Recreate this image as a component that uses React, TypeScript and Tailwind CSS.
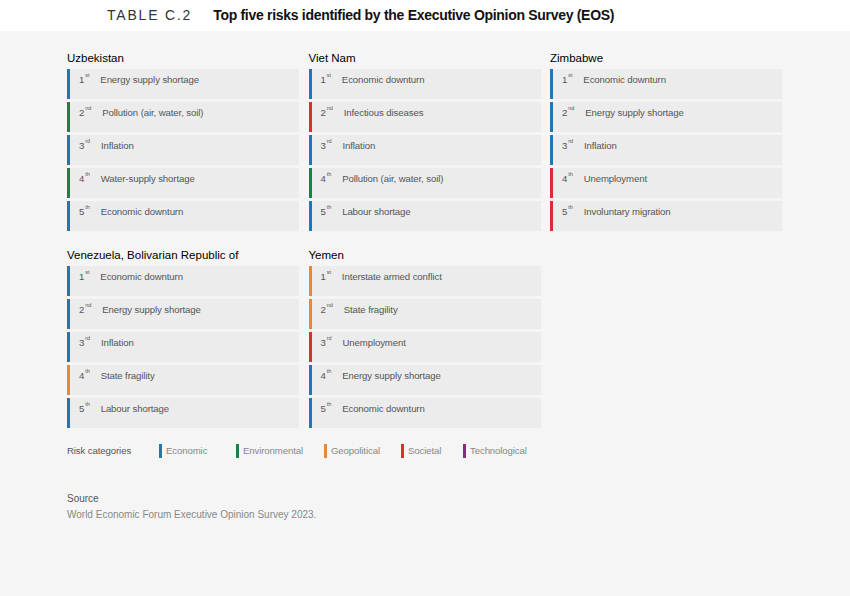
import React from "react";

type Cat = "eco" | "env" | "geo" | "soc" | "tech";

const BAR: Record<Cat, string> = {
  eco: "bg-[#1f78b4]",
  env: "bg-[#1b7f47]",
  geo: "bg-[#e5883a]",
  soc: "bg-[#d9302f]",
  tech: "bg-[#8b2a7b]",
};

interface Country {
  name: string;
  risks: [string, Cat][];
}

const ROW1: Country[] = [
  {
    name: "Uzbekistan",
    risks: [
      ["Energy supply shortage", "eco"],
      ["Pollution (air, water, soil)", "env"],
      ["Inflation", "eco"],
      ["Water-supply shortage", "env"],
      ["Economic downturn", "eco"],
    ],
  },
  {
    name: "Viet Nam",
    risks: [
      ["Economic downturn", "eco"],
      ["Infectious diseases", "soc"],
      ["Inflation", "eco"],
      ["Pollution (air, water, soil)", "env"],
      ["Labour shortage", "eco"],
    ],
  },
  {
    name: "Zimbabwe",
    risks: [
      ["Economic downturn", "eco"],
      ["Energy supply shortage", "eco"],
      ["Inflation", "eco"],
      ["Unemployment", "soc"],
      ["Involuntary migration", "soc"],
    ],
  },
];

const ROW2: Country[] = [
  {
    name: "Venezuela, Bolivarian Republic of",
    risks: [
      ["Economic downturn", "eco"],
      ["Energy supply shortage", "eco"],
      ["Inflation", "eco"],
      ["State fragility", "geo"],
      ["Labour shortage", "eco"],
    ],
  },
  {
    name: "Yemen",
    risks: [
      ["Interstate armed conflict", "geo"],
      ["State fragility", "geo"],
      ["Unemployment", "soc"],
      ["Energy supply shortage", "eco"],
      ["Economic downturn", "eco"],
    ],
  },
];

const SUFFIX = ["st", "nd", "rd", "th", "th"];

function CountryBlock({ country }: { country: Country }) {
  return (
    <div className="w-[232px]">
      <h3 className="text-[11.5px] leading-[14px] text-black mb-[4px] h-[14px]">{country.name}</h3>
      <div className="flex flex-col gap-[3px]">
        {country.risks.map(([label, cat], i) => (
          <div key={i} className="flex h-[30px] bg-[#ececec]">
            <div className={`w-[3px] ${BAR[cat]}`} />
            <div className="flex items-start gap-[11px] pt-[5px] pl-[9px] text-[9.6px] leading-[12px] text-[#555] tracking-[-0.1px]">
              <span className="shrink-0">
                {i + 1}
                <sup className="text-[5.5px] align-top relative top-[1px] ml-[1px]">{SUFFIX[i]}</sup>
              </span>
              <span>{label}</span>
            </div>
          </div>
        ))}
      </div>
    </div>
  );
}

const LEGEND: [string, Cat, string][] = [
  ["Economic", "eco", "w-[77px]"],
  ["Environmental", "env", "w-[88px]"],
  ["Geopolitical", "geo", "w-[77px]"],
  ["Societal", "soc", "w-[62px]"],
  ["Technological", "tech", "w-[90px]"],
];

export default function App() {
  return (
    <div className="w-[850px] h-[596px] bg-[#f5f5f5] font-['Liberation_Sans',Arial,sans-serif]">
      <div className="h-[31px] bg-white flex items-center pl-[107px]">
        <span className="text-[14px] tracking-[1.8px] text-[#333] font-light">TABLE C.2</span>
        <span className="ml-[21px] text-[14px] font-bold text-[#111] tracking-[-0.3px]">
          Top five risks identified by the Executive Opinion Survey (EOS)
        </span>
      </div>
      <div className="pl-[67px] pt-[20px]">
        <div className="flex gap-[9.5px]">
          {ROW1.map((c) => (
            <CountryBlock key={c.name} country={c} />
          ))}
        </div>
        <div className="flex gap-[9.5px] mt-[17px]">
          {ROW2.map((c) => (
            <CountryBlock key={c.name} country={c} />
          ))}
        </div>
        <div className="flex items-center mt-[16px] text-[9.6px] text-[#555] tracking-[-0.1px]">
          <span className="w-[92px]">Risk categories</span>
          {LEGEND.map(([label, cat, w]) => (
            <div key={label} className={`flex items-center ${w}`}>
              <div className={`w-[3px] h-[14px] ${BAR[cat]} mr-[4px]`} />
              <span className="text-[#888]">{label}</span>
            </div>
          ))}
        </div>
        <div className="mt-[34px] text-[10px] leading-[14px]">
          <div className="text-[#555]">Source</div>
          <div className="text-[#888] mt-[2px]">World Economic Forum Executive Opinion Survey 2023.</div>
        </div>
      </div>
    </div>
  );
}
